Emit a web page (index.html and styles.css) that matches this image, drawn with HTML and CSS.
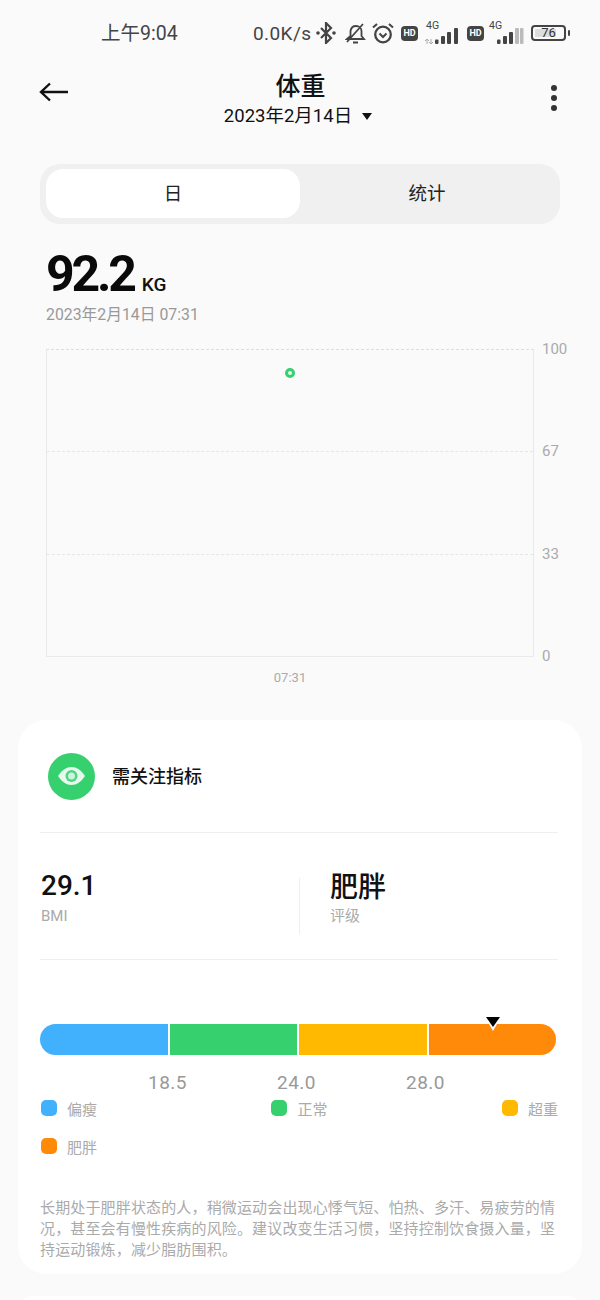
FILE: index.html
```html
<!DOCTYPE html>
<html lang="zh-CN">
<head>
<meta charset="utf-8">
<title>体重</title>
<link rel="stylesheet" href="styles.css">
</head>
<body>
<div class="status">
  <span class="clock">上午9:04</span>
  <span class="speed">0.0K/s</span>
  <svg class="ic-bt" width="20" height="22" viewBox="0 0 20 22"><path d="M5 6l10 10-5 5V1l5 5L5 16" fill="none" stroke="#444" stroke-width="2.2"/><circle cx="2" cy="11" r="1.8" fill="#444"/><circle cx="18" cy="11" r="1.8" fill="#444"/></svg>
  <svg class="ic-bell" width="21" height="22" viewBox="0 0 21 22"><path d="M2 17h17l-2.500-3V9c0-3-2.500-5-5.500-5S6 6 5.500 9v5zM8 20.500h5M2 20L18 2" fill="none" stroke="#444" stroke-width="1.800"/></svg>
  <svg class="ic-alarm" width="22" height="22" viewBox="0 0 22 22"><circle cx="11" cy="12.500" r="7.800" fill="none" stroke="#444" stroke-width="2.300"/><path d="M7.500 11.500l3.500 3.500 3.500-3.500M1 5.500L5 2M21 5.500L17 2" fill="none" stroke="#444" stroke-width="2"/></svg>
  <span class="hd">HD</span>
  <span class="sig">
    <span class="g4">4G</span>
    <svg width="36" height="21" viewBox="0 0 36 21"><path d="M2 15v5M0 17l2-2 2 2M6 20v-5M4 18l2 2 2-2" stroke="#aaa" stroke-width="1" fill="none"/><rect x="10" y="15.500" width="3.500" height="4.500" rx="1" fill="#444"/><rect x="16" y="12" width="4" height="8" rx="1" fill="#444"/><rect x="22" y="8" width="4" height="12" rx="1" fill="#444"/><rect x="29" y="4" width="4" height="16" rx="1" fill="#444"/></svg>
  </span>
  <span class="hd hd2">HD</span>
  <span class="sig sig2">
    <span class="g4">4G</span>
    <svg width="36" height="21" viewBox="0 0 36 21"><rect x="9" y="15.500" width="3.500" height="4.500" rx="1" fill="#444"/><rect x="15" y="12" width="4" height="8" rx="1" fill="#444"/><rect x="21" y="8" width="4" height="12" rx="1" fill="#444"/><rect x="27" y="4" width="4" height="16" rx="1" fill="#bbb"/><rect x="32" y="4" width="3.500" height="16" rx="1" fill="#bbb"/></svg>
  </span>
  <span class="batt"><span class="batt-fill"></span><span class="batt-num">76</span></span>
  <span class="batt-tip"></span>
</div>

<header class="top">
  <svg class="back" width="30" height="20" viewBox="0 0 30 20"><path d="M29 10H2M11 1.500L2 10l9 8.500" fill="none" stroke="#111" stroke-width="2.400"/></svg>
  <div class="title-wrap">
    <div class="title">体重</div>
    <div class="subtitle">2023年2月14日<span class="caret"></span></div>
  </div>
  <div class="more"><i></i><i></i><i></i></div>
</header>

<div class="tabs">
  <div class="tab active">日</div>
  <div class="tab">统计</div>
</div>

<section class="reading">
  <div class="weight"><b>92.2</b><span class="unit">KG</span></div>
  <div class="when">2023年2月14日 07:31</div>
</section>

<section class="chart">
  <div class="plot">
    <div class="band"></div>
    <div class="band"></div>
    <div class="band"></div>
    <span class="point"></span>
  </div>
  <div class="yaxis"><span>100</span><span>67</span><span>33</span><span>0</span></div>
</section>
<div class="xaxis">07:31</div>

<section class="card">
  <div class="card-head">
    <span class="eye"><svg width="27" height="18" viewBox="0 0 27 18"><path d="M0 9C4 3 8.500 0 13.500 0S23 3 27 9c-4 6-8.500 9-13.500 9S4 15 0 9z" fill="#e6f9ed"/><circle cx="13.500" cy="9" r="6" fill="#4ed582"/><circle cx="13.500" cy="9" r="3.500" fill="#cdf2da"/></svg></span>
    <span class="head-text">需关注指标</span>
  </div>
  <div class="stats">
    <div class="stat"><div class="stat-val">29.1</div><div class="stat-label">BMI</div></div>
    <div class="stat stat-right"><div class="stat-val">肥胖</div><div class="stat-label">评级</div></div>
  </div>
  <div class="scale">
    <div class="bar">
      <span class="seg blue"></span><span class="seg green"></span><span class="seg yellow"></span><span class="seg orange"></span>
      <svg class="marker" width="18" height="15" viewBox="0 0 18 15"><path d="M1 0h16L9 14z" fill="#fff"/><path d="M2 0h14L9 10z" fill="#000"/></svg>
    </div>
    <div class="ticks"><span>18.5</span><span>24.0</span><span>28.0</span></div>
    <div class="legend">
      <span class="key"><i class="blue"></i>偏瘦</span>
      <span class="key"><i class="green"></i>正常</span>
      <span class="key"><i class="yellow"></i>超重</span>
    </div>
    <div class="legend">
      <span class="key"><i class="orange"></i>肥胖</span>
    </div>
  </div>
  <p class="note">长期处于肥胖状态的人，稍微运动会出现心悸气短、怕热、多汗、易疲劳的情况，甚至会有慢性疾病的风险。建议改变生活习惯，坚持控制饮食摄入量，坚持运动锻炼，减少脂肪围积。</p>
</section>
<div class="card next"></div>
</body>
</html>
```
FILE: styles.css
```css
* { box-sizing: border-box; }
html, body { margin: 0; padding: 0; }
body {
  width: 600px;
  height: 1300px;
  overflow: hidden;
  background: #fafafa;
  color: #111;
  font-family: Roboto, "Noto Sans CJK SC", sans-serif;
}

/* status bar */
.status {
  display: flex;
  align-items: center;
  height: 66px;
  padding-left: 101px;
  color: #444;
  font-size: 19px;
}
.clock { width: 152px; font-size: 19.5px; line-height: 22px; margin-top: 1px; }
.speed { width: 62px; letter-spacing: .4px; line-height: 22px; margin-top: 1px; }
.ic-bt { margin-left: 1px; }
.ic-bell { margin-left: 9px; }
.ic-alarm { margin-left: 6px; }
.hd {
  margin-left: 7px;
  width: 17px;
  height: 15px;
  background: #444;
  border-radius: 4px;
  color: #fff;
  font-size: 9px;
  font-weight: 700;
  line-height: 15px;
  text-align: center;
}
.hd2 { margin-left: 6px; }
.sig { position: relative; display: flex; margin-left: 7px; width: 36px; height: 21px; }
.sig2 { margin-left: 4px; }
.g4 { position: absolute; left: 1px; top: -3px; font-size: 10.5px; line-height: 12px; color: #444; }
.sig .g4 + svg { margin-top: 1px; }
.batt {
  position: relative;
  margin-left: 7px;
  width: 35px;
  height: 16px;
  border: 2px solid #444;
  border-radius: 4px;
}
.batt-fill { position: absolute; left: 2px; top: 2px; bottom: 2px; width: 21px; background: #ddd; border-radius: 1px; }
.batt-num { position: absolute; inset: 0; text-align: center; font-size: 13px; line-height: 12px; color: #333; }
.batt-tip { width: 2px; height: 6px; margin-left: 2px; background: #444; border-radius: 1px; }

/* header */
.top {
  display: grid;
  grid-template-columns: 1fr auto 1fr;
  align-items: center;
  height: 64px;
  padding: 4px 43px 0 39px;
}
.back { margin-top: -16px; }
.title-wrap { text-align: center; }
.title { font-size: 25px; line-height: 32px; font-weight: 500; padding-left: 5px; }
.subtitle { font-size: 18.5px; line-height: 26px; display: flex; align-items: center; }
.caret {
  margin-left: 10px;
  width: 0;
  height: 0;
  border: 5.5px solid transparent;
  border-top: 7px solid #111;
  border-bottom: 0;
}
.more { justify-self: end; display: flex; flex-direction: column; gap: 4px; margin-top: -4px; }
.more i { display: block; width: 6px; height: 6px; border-radius: 50%; background: #333; }

/* tabs */
.tabs {
  display: flex;
  margin: 34px 40px 0;
  height: 60px;
  padding: 5px 6px 6px;
  border-radius: 20px;
  background: #f0f0f0;
}
.tab {
  flex: 1;
  text-align: center;
  font-size: 18.5px;
  line-height: 50px;
  color: #222;
  border-radius: 17px;
}
.active { background: #fff; }

/* reading */
.reading { padding: 24px 0 0 46px; }
.weight { display: flex; align-items: baseline; height: 52px; }
.weight b { font-size: 50px; line-height: 52px; font-weight: 700; letter-spacing: -3.2px; color: #0a0a0a; }
.unit { font-size: 19px; font-weight: 500; margin-left: 8px; }
.when { font-size: 15.8px; line-height: 24px; color: #999; margin-top: 3px; }

/* chart */
.chart { display: flex; margin: 22px 0 0 46px; }
.plot {
  position: relative;
  width: 488px;
  height: 308px;
  border-left: 1px solid #e9e9e9;
  border-right: 1px solid #e9e9e9;
  border-bottom: 1px solid #e9e9e9;
  border-top: 1px dashed #ddd;
}
.band { height: 102.3px; border-bottom: 1px dashed #e6e6e6; }
.band:last-of-type { border-bottom: 0; }
.point {
  position: absolute;
  left: 238px;
  top: 18px;
  width: 10px;
  height: 10px;
  border: 3.5px solid #36d06f;
  border-radius: 50%;
  background: #e6f9ed;
}
.yaxis {
  height: 308px;
  margin: -8px 0 0 8px;
  font-size: 15px;
  line-height: 16px;
  color: #aaa;
}
.yaxis span { display: block; height: 102.33px; }
.yaxis span:last-child { height: 16px; }
.xaxis { width: 488px; margin: 12px 0 0 46px; text-align: center; font-size: 13px; line-height: 18px; color: #aaa; }

/* card */
.card {
  margin: 33px 18px 0;
  height: 554px;
  padding: 0 22px;
  background: #fff;
  border-radius: 28px;
}
.card-head {
  display: flex;
  align-items: center;
  height: 113px;
  padding-left: 8px;
  border-bottom: 1px solid #eee;
  margin-right: 2px;
}
.eye {
  display: flex;
  align-items: center;
  justify-content: center;
  width: 47px;
  height: 47px;
  border-radius: 50%;
  background: #36d06f;
}
.head-text { margin: -2px 0 0 17px; font-size: 18px; font-weight: 500; }
.stats {
  display: flex;
  align-items: center;
  height: 127px;
  border-bottom: 1px solid #eee;
  margin-right: 2px;
}
.stat { width: 261px; padding-left: 1px; margin-top: 10px; }
.stat-right { height: 56px; border-left: 1px solid #eee; padding-left: 30px; margin-top: 19px; }
.stat-val { font-size: 28px; line-height: 36px; font-weight: 500; margin-top: -8px; }
.stat-label { font-size: 15px; line-height: 20px; color: #aaa; margin-top: 2px; }
.stat-right .stat-label { margin-top: 0; }

.scale { padding-top: 64px; margin-right: 4px; }
.bar { position: relative; display: flex; height: 31px; gap: 2px; border-radius: 16px; overflow: visible; }
.seg { flex: 1; }
.seg.blue { border-radius: 16px 0 0 16px; }
.seg.orange { border-radius: 0 16px 16px 0; }
.blue { background: #41b0fd; }
.green { background: #36d06f; }
.yellow { background: #ffb900; }
.orange { background: #ff8a0a; }
.marker { position: absolute; left: 444px; top: -7px; }
.ticks { display: flex; padding: 15px 0 0 63px; height: 43px; }
.ticks span { width: 129px; text-align: center; font-size: 19px; letter-spacing: .5px; line-height: 26px; color: #999; }
.legend { display: flex; justify-content: space-between; height: 38px; margin-right: -2px; padding-left: 1px; }
.key { display: flex; align-items: center; height: 20px; font-size: 15px; color: #aaa; }
.key i { width: 16px; height: 16px; border-radius: 5px; margin-right: 10px; }

.note {
  margin: 24px 0 0;
  width: 520px;
  font-size: 15px;
  letter-spacing: .15px;
  line-height: 21px;
  color: #aaa;
}
.next { margin-top: 22px; height: 30px; }
```
